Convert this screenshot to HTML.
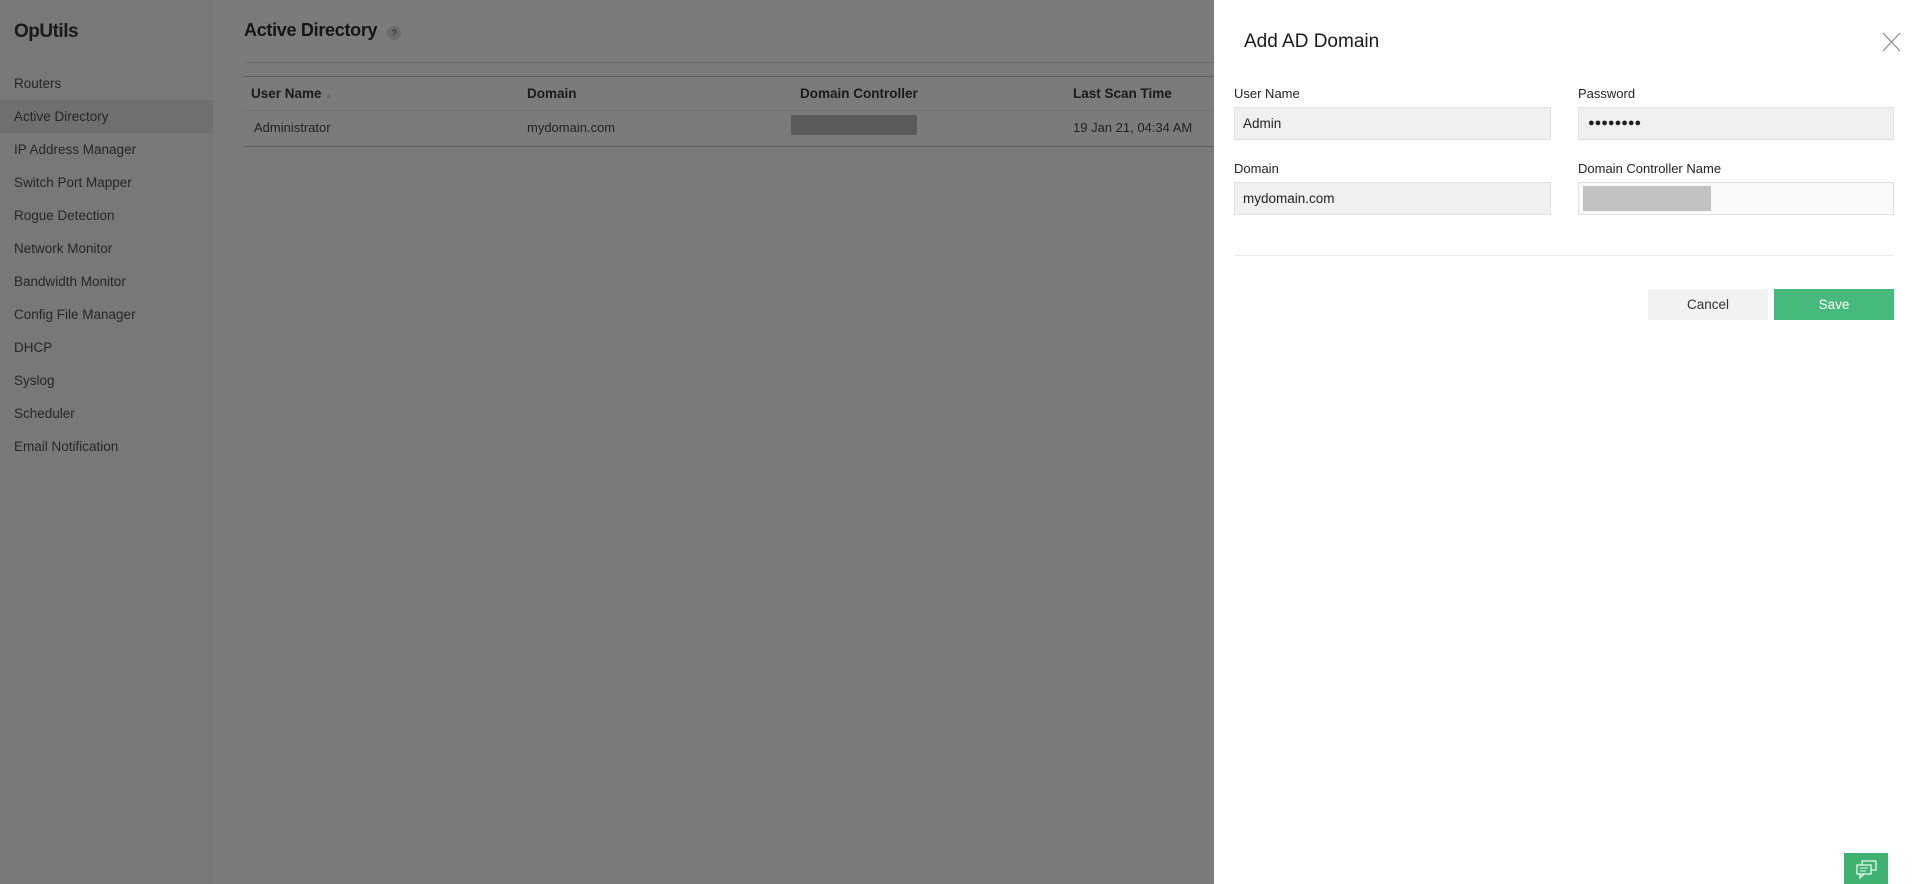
<!DOCTYPE html>
<html><head><style>
*{margin:0;padding:0;box-sizing:border-box}
html,body{width:1914px;min-height:884px;height:100%;overflow:hidden;background:#7b7b7b}
body{font-family:"Liberation Sans",sans-serif;position:relative;color:#1e1e1e}
.sb{position:absolute;left:0;top:0;bottom:0;min-height:884px;width:213px;background:#787878;border-right:1px solid #747474}
.logo{position:absolute;left:14px;top:21px;font-size:19px;color:#1a1a1a;font-weight:bold;letter-spacing:-0.5px}
.nav{position:absolute;left:0;width:213px;height:33px;line-height:33px;padding-left:14px;font-size:13.5px;color:#262626}
.nav.act{background:#6f6f6f}
.t{position:absolute;white-space:nowrap}
.ln{position:absolute;height:1px;background:#6a6a6a}
.panel{position:absolute;left:1214px;top:0;bottom:0;min-height:884px;width:700px;background:#fff}
.lbl{position:absolute;font-size:13px;color:#222}
.inp{position:absolute;height:33px;background:#f0f0f0;border:1px solid #e0e0e0;font-size:13.5px;line-height:31px;padding-left:8px;color:#222}
</style></head><body>
<div class="sb">
<div class="logo">OpUtils</div>
<div class="nav" style="top:67px">Routers</div>
<div class="nav act" style="top:100px">Active Directory</div>
<div class="nav" style="top:133px">IP Address Manager</div>
<div class="nav" style="top:166px">Switch Port Mapper</div>
<div class="nav" style="top:199px">Rogue Detection</div>
<div class="nav" style="top:232px">Network Monitor</div>
<div class="nav" style="top:265px">Bandwidth Monitor</div>
<div class="nav" style="top:298px">Config File Manager</div>
<div class="nav" style="top:331px">DHCP</div>
<div class="nav" style="top:364px">Syslog</div>
<div class="nav" style="top:397px">Scheduler</div>
<div class="nav" style="top:430px">Email Notification</div>
</div>
<div class="t" style="left:244px;top:20px;font-size:18px;color:#151515;font-weight:bold;letter-spacing:-0.3px">Active Directory</div>
<div style="position:absolute;left:387px;top:26px;width:14px;height:14px;border-radius:50%;background:#6c6c6c;font-size:9px;text-align:center;line-height:14px;color:#222">?</div>
<div class="ln" style="left:244px;top:62px;width:970px"></div>
<div class="ln" style="left:244px;top:76px;width:970px;background:#5e5e5e"></div>
<div class="t" style="left:251px;top:86px;font-size:13.5px;color:#1a1a1a;font-weight:bold">User Name <span style="font-size:7px;color:#666">▲</span></div>
<div class="t" style="left:527px;top:86px;font-size:13.5px;color:#1a1a1a;font-weight:bold">Domain</div>
<div class="t" style="left:800px;top:86px;font-size:13.5px;color:#1a1a1a;font-weight:bold">Domain Controller</div>
<div class="t" style="left:1073px;top:86px;font-size:13.5px;color:#1a1a1a;font-weight:bold">Last Scan Time</div>
<div class="ln" style="left:244px;top:110px;width:970px;background:#707070"></div>
<div class="t" style="left:254px;top:120px;font-size:13px;color:#222">Administrator</div>
<div class="t" style="left:527px;top:120px;font-size:13px;color:#222">mydomain.com</div>
<div style="position:absolute;left:791px;top:115px;width:126px;height:20px;background:#5a5a5a"></div>
<div class="t" style="left:1073px;top:120px;font-size:13px;color:#222">19 Jan 21, 04:34 AM</div>
<div class="ln" style="left:244px;top:146px;width:970px;background:#5e5e5e"></div>
<div class="panel">
<div class="t" style="left:30px;top:31px;font-size:19px;color:#1a1a1a">Add AD Domain</div>
<svg style="position:absolute;left:668px;top:32px" width="19" height="20"><path d="M1 1L18 19M18 1L1 19" stroke="#888" stroke-width="1.2" fill="none"/></svg>
<div class="lbl" style="left:20px;top:86px">User Name</div>
<div class="lbl" style="left:364px;top:86px">Password</div>
<div class="inp" style="left:20px;top:107px;width:317px">Admin</div>
<div class="inp" style="left:364px;top:107px;width:316px;font-size:11px;padding-left:9px">●●●●●●●●</div>
<div class="lbl" style="left:20px;top:161px">Domain</div>
<div class="lbl" style="left:364px;top:161px">Domain Controller Name</div>
<div class="inp" style="left:20px;top:182px;width:317px">mydomain.com</div>
<div class="inp" style="left:364px;top:182px;width:316px;background:#fafafa"></div>
<div style="position:absolute;left:369px;top:186px;width:128px;height:25px;background:#c2c2c2"></div>
<div style="position:absolute;left:20px;top:255px;width:660px;height:1px;background:#ebebeb"></div>
<div style="position:absolute;left:434px;top:289px;width:120px;height:31px;background:#f2f2f2;text-align:center;line-height:31px;font-size:13.5px;color:#333">Cancel</div>
<div style="position:absolute;left:560px;top:289px;width:120px;height:31px;background:#46b97d;text-align:center;line-height:31px;font-size:13.5px;color:#fff">Save</div>
<div style="position:absolute;left:630px;top:853px;width:44px;height:31px;background:#3fb272">
<svg width="44" height="31"><rect x="18" y="8" width="14" height="9" fill="none" stroke="#e6f5ec" stroke-width="1.3"/><rect x="13" y="12" width="14" height="9" fill="#3fb272" stroke="#e6f5ec" stroke-width="1.3"/><path d="M16 21l0 4 4-4" fill="none" stroke="#e6f5ec" stroke-width="1.3"/><path d="M16 15h8M16 18h6" stroke="#e6f5ec"/></svg>
</div>
</div>
</body></html>
